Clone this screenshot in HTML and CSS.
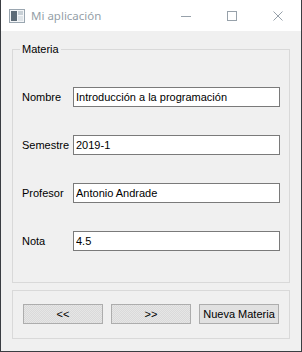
FILE: index.html
```html
<!DOCTYPE html>
<html lang="es">
<head>
    <meta charset="UTF-8">
    <meta name="viewport" content="width=device-width, initial-scale=1.0">
    <title>Mi aplicación</title>
    <link rel="stylesheet" href="styles.css">
</head>
<body>
    <div class="window">
        <div class="titlebar">
            <svg class="app-icon" width="16" height="14" viewBox="0 0 16 14">
                <rect x="0.5" y="0.5" width="15" height="13" fill="#f4f6f8" stroke="#9aa6b0"/>
                <rect x="2" y="2" width="6" height="10" fill="#5e6c78"/>
                <rect x="9" y="2" width="5" height="4" fill="#c8d0d6"/>
                <rect x="9" y="7" width="5" height="5" fill="#dfe4e8"/>
            </svg>
            <span class="title">Mi aplicación</span>
            <div class="controls">
                <span class="ctrl">
                    <svg width="10" height="10" viewBox="0 0 10 10"><path d="M0 5.5H10" stroke="#97a1aa" stroke-width="1"/></svg>
                </span>
                <span class="ctrl">
                    <svg width="10" height="10" viewBox="0 0 10 10"><rect x="0.5" y="0.5" width="9" height="9" fill="none" stroke="#97a1aa"/></svg>
                </span>
                <span class="ctrl">
                    <svg width="10" height="10" viewBox="0 0 10 10"><path d="M0.5 0.5L9.5 9.5M9.5 0.5L0.5 9.5" stroke="#97a1aa" stroke-width="1"/></svg>
                </span>
            </div>
        </div>

        <div class="content">
            <fieldset class="group">
                <legend>Materia</legend>
                <div class="row">
                    <label for="nombre">Nombre</label>
                    <input type="text" id="nombre" value="Introducción a la programación">
                </div>
                <div class="row">
                    <label for="semestre">Semestre</label>
                    <input type="text" id="semestre" value="2019-1">
                </div>
                <div class="row">
                    <label for="profesor">Profesor</label>
                    <input type="text" id="profesor" value="Antonio Andrade">
                </div>
                <div class="row">
                    <label for="nota">Nota</label>
                    <input type="text" id="nota" value="4.5">
                </div>
            </fieldset>

            <div class="group buttons">
                <button class="btn hatched">&lt;&lt;</button>
                <button class="btn hatched">&gt;&gt;</button>
                <button class="btn">Nueva Materia</button>
            </div>
        </div>
    </div>
</body>
</html>
```

FILE: styles.css
```css
body {
    margin: 0;
    font-family: "Liberation Sans", Arial, sans-serif;
    font-size: 11px;
    color: #000;
    background-color: #2a2d33;
}
.window {
    width: 302px;
    height: 352px;
    box-sizing: border-box;
    border: 1px solid #3a3d42;
    border-top: none;
    background-color: #f0f0f0;
}
.titlebar {
    height: 31px;
    background-color: #fff;
    display: flex;
    align-items: center;
}
.app-icon {
    margin-left: 8px;
    margin-right: 6px;
}
.title {
    font-family: "Noto Sans", sans-serif;
    font-size: 11.5px;
    color: #959fa8;
}
.controls {
    margin-left: auto;
    display: flex;
    height: 31px;
}
.ctrl {
    width: 46px;
    display: flex;
    align-items: center;
    justify-content: center;
}
.content {
    padding: 11px 11px 0 11px;
}
.group {
    margin: 0;
    border: 1px solid #d9d9d9;
}
fieldset.group {
    padding: 31px 9px 31px 9px;
    display: flex;
    flex-direction: column;
    gap: 28px;
}
legend {
    margin-left: -2px;
    padding: 0 2px;
    line-height: 14px;
    height: 14px;
}
.row {
    display: flex;
    align-items: center;
    height: 20px;
}
.row label {
    width: 51px;
}
.row input {
    width: 207px;
    height: 20px;
    box-sizing: border-box;
    border: 1px solid #7a7a7a;
    padding: 0 2px;
    font-family: inherit;
    font-size: 11px;
    background-color: #fff;
    outline: none;
}
.buttons {
    margin-top: 7px;
    padding: 13px 10px 14px 10px;
    display: flex;
    gap: 8px;
}
.btn {
    width: 80px;
    height: 20px;
    padding: 0;
    border: 1px solid #adadad;
    background-color: #e1e1e1;
    font-family: inherit;
    font-size: 11px;
    color: #000;
}
.btn.hatched {
    background: repeating-conic-gradient(#e6e6e6 0% 25%, #dadada 0% 50%) 0 0 / 2px 2px;
}
```
